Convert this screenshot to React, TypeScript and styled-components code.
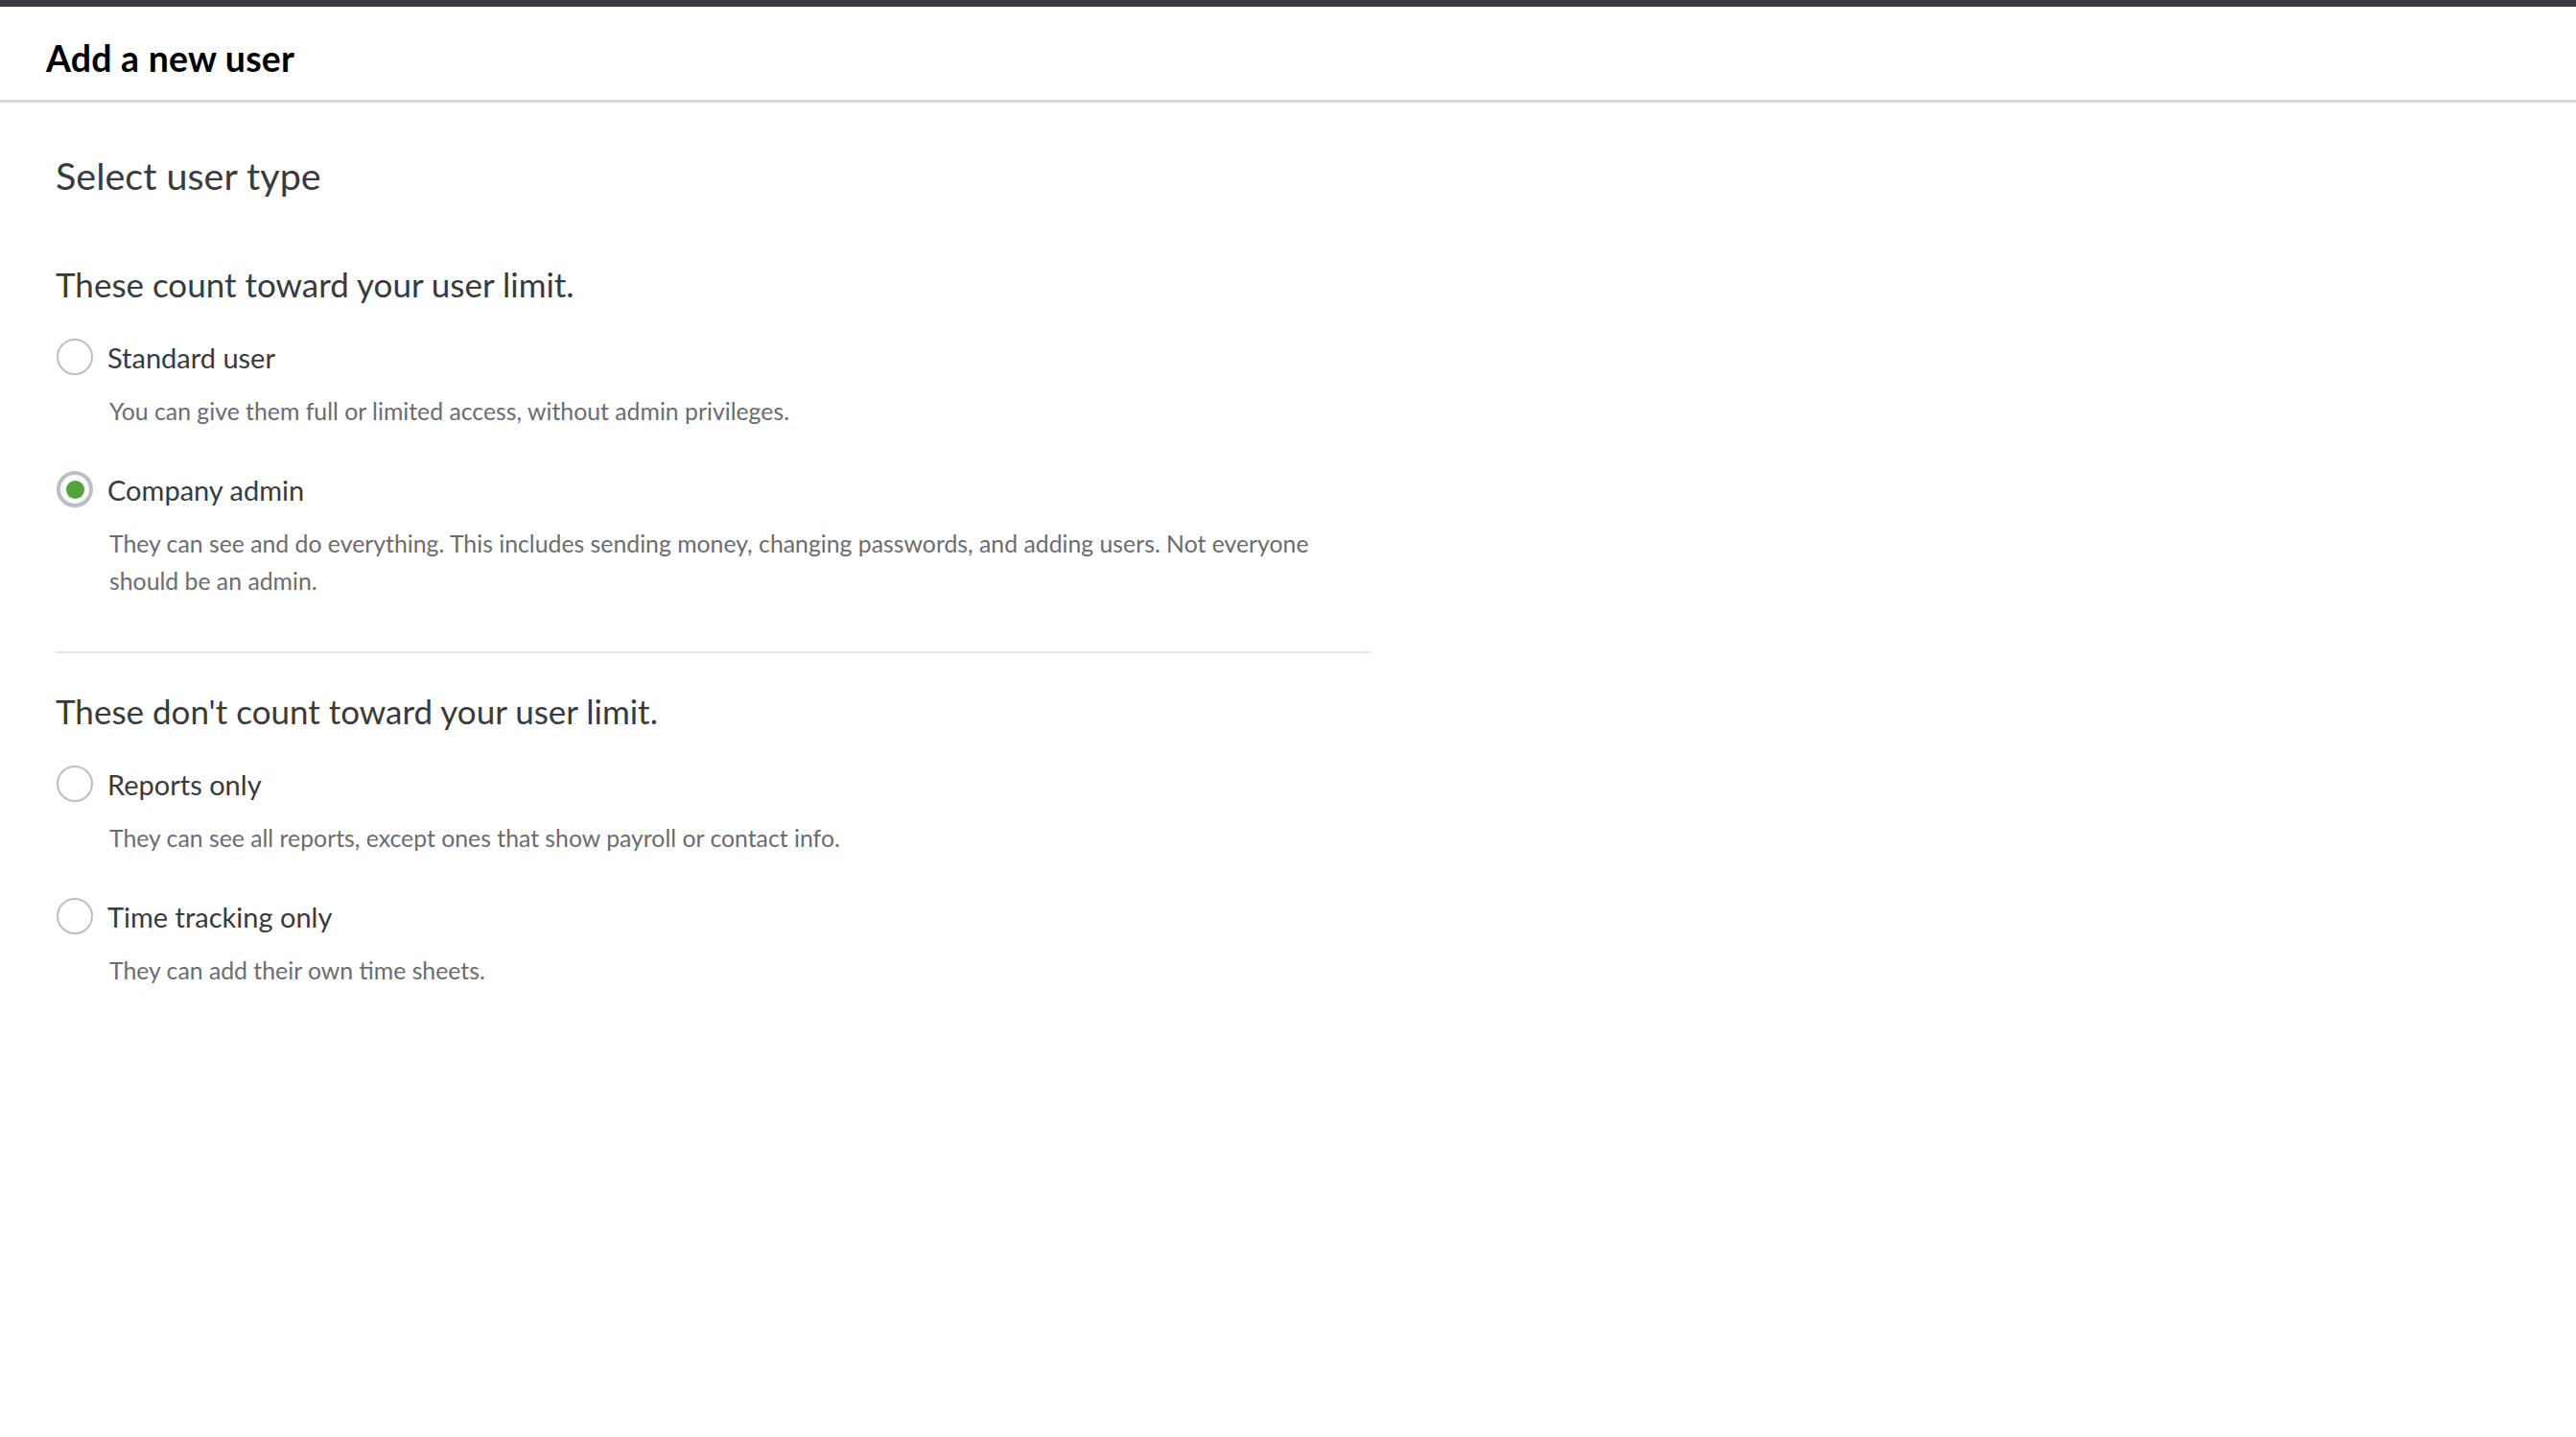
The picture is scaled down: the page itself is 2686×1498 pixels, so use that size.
import * as React from 'react';
import styled, { createGlobalStyle } from 'styled-components';

const GlobalStyle = createGlobalStyle`
  html, body {
    margin: 0;
    padding: 0;
    background: #fff;
  }
  body {
    font-family: Lato, "Open Sans", "Liberation Sans", sans-serif;
    color: #393a3d;
  }
`;

const Page = styled.div`
  min-height: 1498px;
  border-top: 7px solid #393a3d;
  box-sizing: border-box;
`;

const Header = styled.header`
  height: 100px;
  display: flex;
  align-items: center;
  padding: 9px 0 0 48px;
  box-sizing: border-box;
  border-bottom: 3px solid #d4d7dc;
`;

const Title = styled.h1`
  margin: 0;
  font-size: 37.5px;
  font-weight: 700;
  color: #000;
  letter-spacing: 0.2px;
`;

const Content = styled.main`
  padding: 53px 0 0 58px;
  width: 1371px;
`;

const PageHeading = styled.h2`
  margin: 0 0 70px;
  font-size: 39.5px;
  line-height: 46px;
  font-weight: 400;
  color: #393a3d;
`;

const SectionHeading = styled.h3`
  margin: 0 0 36px;
  font-size: 35px;
  line-height: 40px;
  font-weight: 400;
  color: #393a3d;
`;

const OptionList = styled.div`
  display: flex;
  flex-direction: column;
  gap: 42px;
`;

const Option = styled.label`
  display: flex;
  flex-direction: column;
  gap: 17px;
  cursor: pointer;
`;

const OptionRow = styled.div`
  display: flex;
  align-items: center;
  height: 40px;
`;

const Radio = styled.span<{ $checked?: boolean }>`
  width: 38px;
  height: 38px;
  box-sizing: border-box;
  border-radius: 50%;
  border: ${p => (p.$checked ? '4px' : '2px')} solid #babec5;
  display: flex;
  align-items: center;
  justify-content: center;
  margin-left: 1px;
  margin-right: 15px;
  flex-shrink: 0;

  &::after {
    content: '';
    display: ${p => (p.$checked ? 'block' : 'none')};
    width: 19px;
    height: 19px;
    border-radius: 50%;
    background: #53a33b;
  }
`;

const OptionLabel = styled.span`
  font-size: 29px;
  color: #393a3d;
`;

const Description = styled.p`
  margin: 0;
  padding-left: 56px;
  max-width: 1300px;
  font-size: 24.8px;
  line-height: 39px;
  color: #6b6c72;
`;

const Divider = styled.hr`
  margin: 54px 0 40px;
  border: none;
  border-top: 2px solid #e3e5e8;
`;

type UserType = {
  id: string;
  label: string;
  description: string;
};

const counted: UserType[] = [
  {
    id: 'standard',
    label: 'Standard user',
    description: 'You can give them full or limited access, without admin privileges.',
  },
  {
    id: 'admin',
    label: 'Company admin',
    description:
      'They can see and do everything. This includes sending money, changing passwords, and adding users. Not everyone should be an admin.',
  },
];

const notCounted: UserType[] = [
  {
    id: 'reports',
    label: 'Reports only',
    description: 'They can see all reports, except ones that show payroll or contact info.',
  },
  {
    id: 'time',
    label: 'Time tracking only',
    description: 'They can add their own time sheets.',
  },
];

const App = () => {
  const [selected, setSelected] = React.useState('admin');

  const renderOptions = (items: UserType[]) => (
    <OptionList>
      {items.map(item => (
        <Option key={item.id} onClick={() => setSelected(item.id)}>
          <OptionRow>
            <Radio $checked={selected === item.id} />
            <OptionLabel>{item.label}</OptionLabel>
          </OptionRow>
          <Description>{item.description}</Description>
        </Option>
      ))}
    </OptionList>
  );

  return (
    <Page>
      <GlobalStyle />
      <Header>
        <Title>Add a new user</Title>
      </Header>
      <Content>
        <PageHeading>Select user type</PageHeading>
        <SectionHeading>These count toward your user limit.</SectionHeading>
        {renderOptions(counted)}
        <Divider />
        <SectionHeading>These don't count toward your user limit.</SectionHeading>
        {renderOptions(notCounted)}
      </Content>
    </Page>
  );
};

export default App;
